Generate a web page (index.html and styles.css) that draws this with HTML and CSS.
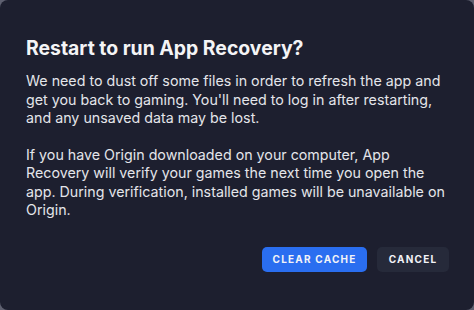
FILE: index.html
```html
<!DOCTYPE html>
<html lang="en">
<head>
<meta charset="utf-8">
<link rel="stylesheet" href="styles.css">
</head>
<body>
<div class="dialog">
  <h1 class="title">Restart to run App Recovery?</h1>
  <p class="text">We need to dust off some files in order to refresh the app and get you back to gaming. You'll need to log in after restarting, and any unsaved data may be lost.</p>
  <p class="text">If you have Origin downloaded on your computer, App Recovery will verify your games the next time you open the app. During verification, installed games will be unavailable on Origin.</p>
  <div class="actions">
    <button class="btn primary">CLEAR CACHE</button>
    <button class="btn secondary">CANCEL</button>
  </div>
</div>
</body>
</html>
```

FILE: styles.css
```css
html, body {
  margin: 0;
  padding: 0;
  width: 474px;
  height: 310px;
  overflow: hidden;
  background: #5e6070;
}
.dialog {
  box-sizing: border-box;
  width: 474px;
  height: 310px;
  background: #1d1f2f;
  border-radius: 8px;
  padding: 35px 24px 0 26px;
  font-family: "Inter", "Liberation Sans", sans-serif;
  color: #e4e5ea;
}
.title {
  margin: 0 0 11px 0;
  font-size: 19.4px;
  line-height: 26px;
  font-weight: 700;
  color: #f4f4f6;
}
.text {
  margin: 0 0 18px 0;
  font-size: 14.25px;
  line-height: 18.5px;
  font-weight: 400;
}
.actions {
  display: flex;
  justify-content: flex-end;
  gap: 10px;
  margin-top: 27px;
  padding-right: 1px;
}
.btn {
  height: 25px;
  border: none;
  border-radius: 5px;
  font-family: "Inter", "Liberation Sans", sans-serif;
  font-size: 10px;
  font-weight: 700;
  letter-spacing: 1.2px;
  color: #f2f3f7;
  padding: 0;
}
.primary {
  width: 105px;
  background: #2a6ef0;
}
.secondary {
  width: 72px;
  background: #262a3a;
}
```
